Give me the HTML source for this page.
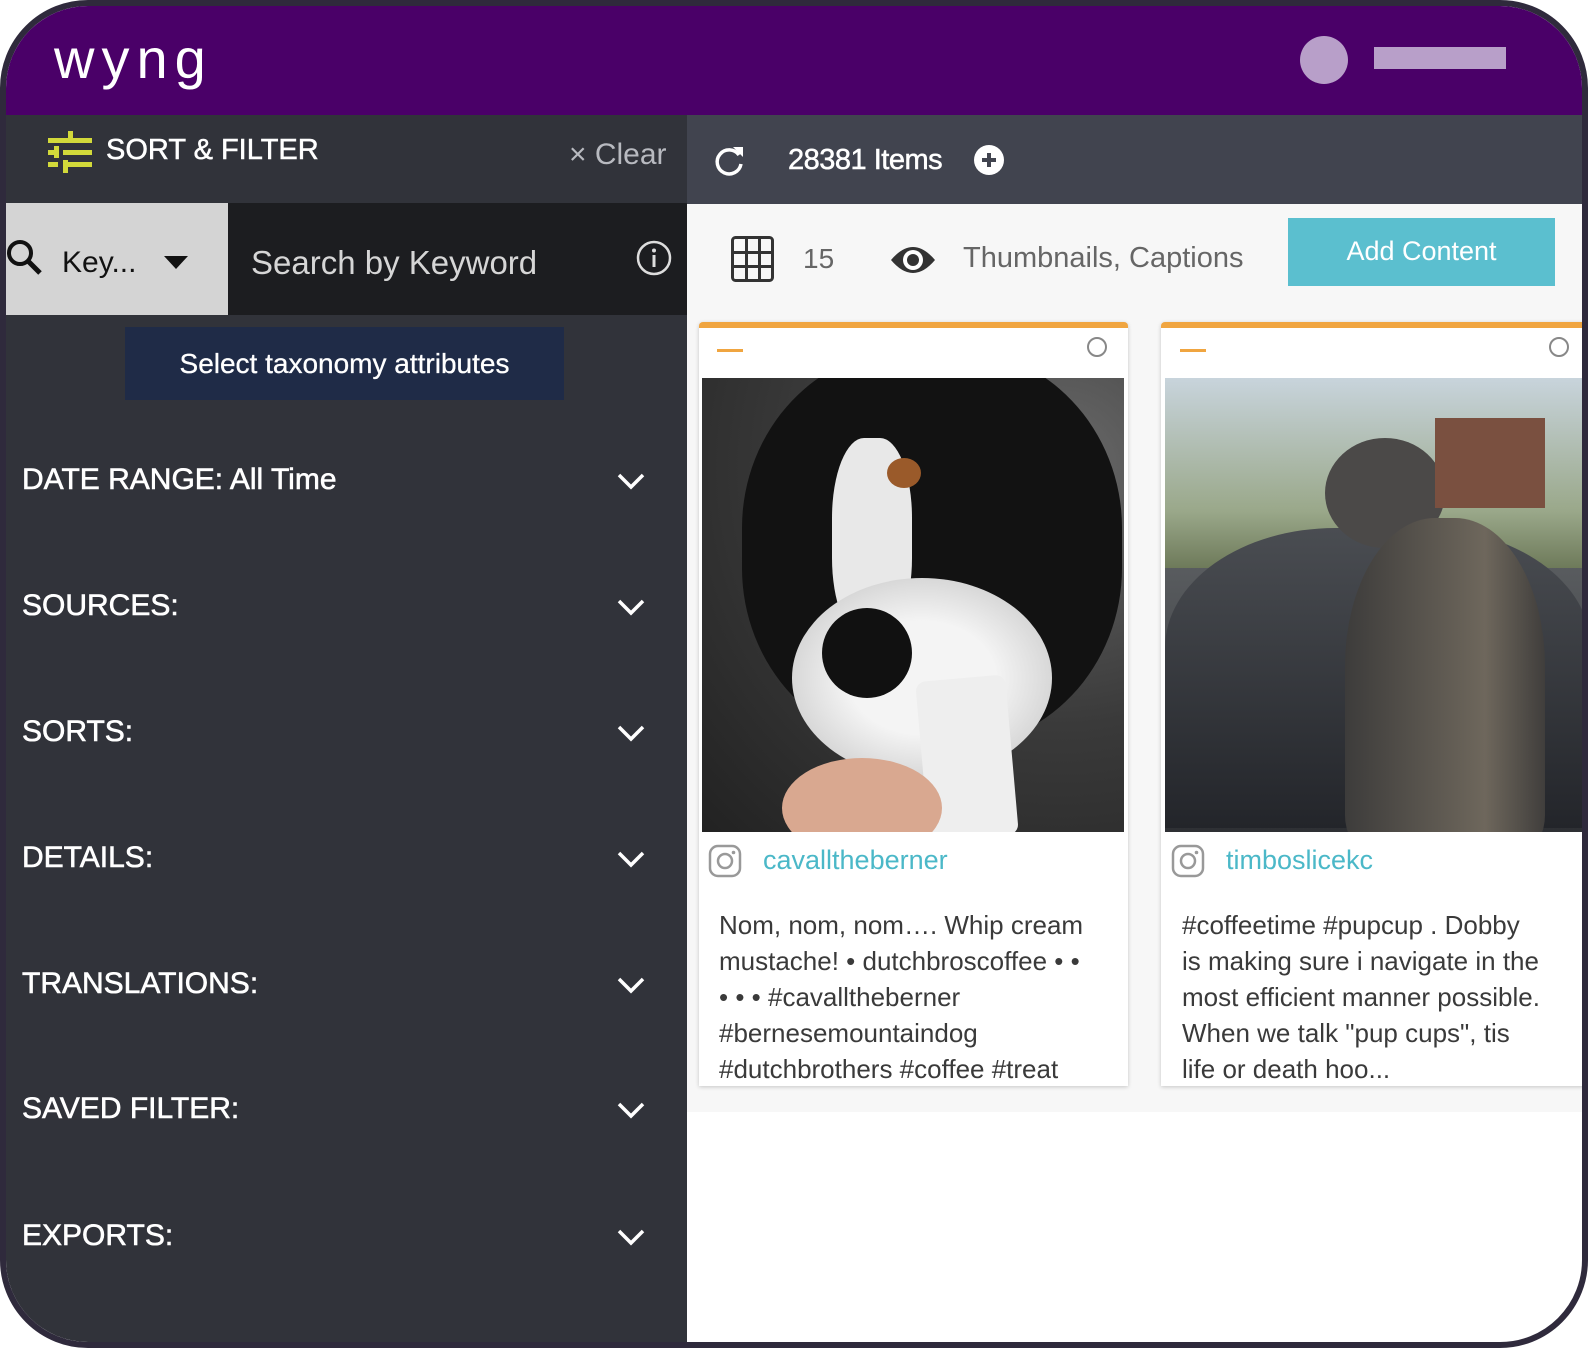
<!DOCTYPE html>
<html><head><meta charset="utf-8"><style>
*{box-sizing:border-box;margin:0;padding:0}
body{width:1588px;height:1348px;background:#fff;font-family:"Liberation Sans",sans-serif;overflow:hidden}
.frame{position:absolute;left:0;top:0;width:1588px;height:1348px;border:6px solid #2f2a3c;border-radius:88px;overflow:hidden;background:#fff}
.abs{position:absolute}
.hdr{left:0;top:0;width:1588px;height:109px;background:#4a0068}
.side{left:0;top:109px;width:681px;height:1240px;background:#31333a}
.fl{left:16px;color:#fff;font-size:30px;-webkit-text-stroke:0.6px #fff}
.chev{left:610px;width:30px;height:20px}
.cap{color:#3a3a3a;font-size:26px;line-height:36px}
</style></head><body>
<div class="frame">
<div class="abs hdr"></div>
<div class="abs" style="left:48px;top:20px;color:#fff;font-size:56px;letter-spacing:7px;font-weight:normal">wyng</div>
<div class="abs" style="left:1294px;top:30px;width:48px;height:48px;border-radius:50%;background:#b89fc9"></div>
<div class="abs" style="left:1368px;top:41px;width:132px;height:22px;background:#b89fc9"></div>

<div class="abs side"></div>
<svg class="abs" style="left:40px;top:124px" width="48" height="44" viewBox="0 0 48 44"><g fill="#d2d93a"><rect x="2" y="8" width="44" height="5"/><rect x="22" y="1" width="5" height="12"/><rect x="2" y="20" width="10" height="5"/><rect x="17" y="20" width="29" height="5"/><rect x="8" y="16" width="5" height="12"/><rect x="2" y="32" width="10" height="5"/><rect x="17" y="32" width="29" height="5"/><rect x="17" y="30" width="5" height="13"/></g></svg>
<div class="abs" style="left:100px;top:128px;color:#fff;font-size:29px;-webkit-text-stroke:0.5px #fff">SORT &amp; FILTER</div>
<div class="abs" style="left:563px;top:132px;color:#b8bac0;font-size:30px">× Clear</div>

<div class="abs" style="left:0;top:197px;width:222px;height:112px;background:#d4d4d4"></div>
<svg class="abs" style="left:0;top:232px" width="40" height="40" viewBox="0 0 40 40"><circle cx="14" cy="15" r="11" fill="none" stroke="#111" stroke-width="4"/><line x1="22" y1="23" x2="34" y2="35" stroke="#111" stroke-width="5"/></svg>
<div class="abs" style="left:56px;top:240px;color:#111;font-size:30px">Key...</div>
<svg class="abs" style="left:158px;top:250px" width="24" height="14"><polygon points="0,0 24,0 12,13" fill="#111"/></svg>
<div class="abs" style="left:222px;top:197px;width:459px;height:112px;background:#1c1d20"></div>
<div class="abs" style="left:245px;top:238px;color:#d6d6d6;font-size:33px">Search by Keyword</div>
<svg class="abs" style="left:630px;top:234px" width="36" height="36"><circle cx="18" cy="18" r="16" fill="none" stroke="#ddd" stroke-width="2.5"/><rect x="16.5" y="15" width="3" height="12" fill="#ddd"/><circle cx="18" cy="10.5" r="2" fill="#ddd"/></svg>

<div class="abs" style="left:119px;top:321px;width:439px;height:73px;background:#1f2b47;color:#fff;font-size:28px;text-align:center;line-height:73px;-webkit-text-stroke:0.3px #fff">Select taxonomy attributes</div>

<div class="abs fl" style="top:457px">DATE RANGE: All Time</div>
<div class="abs fl" style="top:583px">SOURCES:</div>
<div class="abs fl" style="top:709px">SORTS:</div>
<div class="abs fl" style="top:835px">DETAILS:</div>
<div class="abs fl" style="top:961px">TRANSLATIONS:</div>
<div class="abs fl" style="top:1086px">SAVED FILTER:</div>
<div class="abs fl" style="top:1213px">EXPORTS:</div>
<svg class="abs chev" style="top:465px" viewBox="0 0 30 20"><polyline points="3,4 15,16 27,4" fill="none" stroke="#fff" stroke-width="3.5"/></svg>
<svg class="abs chev" style="top:591px" viewBox="0 0 30 20"><polyline points="3,4 15,16 27,4" fill="none" stroke="#fff" stroke-width="3.5"/></svg>
<svg class="abs chev" style="top:717px" viewBox="0 0 30 20"><polyline points="3,4 15,16 27,4" fill="none" stroke="#fff" stroke-width="3.5"/></svg>
<svg class="abs chev" style="top:843px" viewBox="0 0 30 20"><polyline points="3,4 15,16 27,4" fill="none" stroke="#fff" stroke-width="3.5"/></svg>
<svg class="abs chev" style="top:969px" viewBox="0 0 30 20"><polyline points="3,4 15,16 27,4" fill="none" stroke="#fff" stroke-width="3.5"/></svg>
<svg class="abs chev" style="top:1094px" viewBox="0 0 30 20"><polyline points="3,4 15,16 27,4" fill="none" stroke="#fff" stroke-width="3.5"/></svg>
<svg class="abs chev" style="top:1221px" viewBox="0 0 30 20"><polyline points="3,4 15,16 27,4" fill="none" stroke="#fff" stroke-width="3.5"/></svg>

<div class="abs" style="left:681px;top:109px;width:907px;height:89px;background:#41444f"></div>
<svg class="abs" style="left:707px;top:138px" width="32" height="34" viewBox="0 0 32 34"><path d="M26 11 A12 12 0 1 0 28 20" fill="none" stroke="#fff" stroke-width="3.5"/><polygon points="20,3 30,3 30,13" fill="#fff"/></svg>
<div class="abs" style="left:782px;top:138px;color:#fff;font-size:29px;letter-spacing:-0.5px;-webkit-text-stroke:0.5px #fff">28381 Items</div>
<svg class="abs" style="left:968px;top:139px" width="30" height="30"><circle cx="15" cy="15" r="15" fill="#fff"/><rect x="8" y="13" width="14" height="4" fill="#41444f"/><rect x="13" y="8" width="4" height="14" fill="#41444f"/></svg>

<div class="abs" style="left:681px;top:198px;width:907px;height:908px;background:#f7f7f7"></div>
<svg class="abs" style="left:725px;top:230px" width="43" height="46" viewBox="0 0 43 46"><rect x="1.5" y="1.5" width="40" height="43" rx="3" fill="none" stroke="#333" stroke-width="3"/><g fill="#333"><rect x="14" y="2" width="3" height="42"/><rect x="27" y="2" width="3" height="42"/><rect x="2" y="15" width="39" height="3"/><rect x="2" y="29" width="39" height="3"/></g></svg>
<div class="abs" style="left:797px;top:237px;color:#666;font-size:28px">15</div>
<svg class="abs" style="left:883px;top:236px" width="48" height="36" viewBox="0 0 48 36"><path d="M2 18 Q24 -8 46 18 Q24 44 2 18Z" fill="#333"/><circle cx="24" cy="18" r="10" fill="#fff"/><circle cx="24" cy="18" r="6" fill="#333"/></svg>
<div class="abs" style="left:957px;top:236px;color:#666;font-size:29px">Thumbnails, Captions</div>
<div class="abs" style="left:1282px;top:212px;width:267px;height:68px;background:#5bbfcf;color:#fff;font-size:27px;text-align:center;line-height:66px">Add Content</div>

<!-- card 1 -->
<div class="abs" style="left:693px;top:316px;width:429px;height:764px;background:#fff;box-shadow:0 1px 4px rgba(0,0,0,.2);border-top:6px solid #f0a540;border-radius:4px 4px 0 0"></div>
<div class="abs" style="left:711px;top:343px;width:26px;height:3px;background:#f0a540"></div>
<div class="abs" style="left:1081px;top:331px;width:20px;height:20px;border:2px solid #888;border-radius:50%"></div>
<div class="abs" style="left:696px;top:372px;width:422px;height:454px;overflow:hidden;background:radial-gradient(ellipse at 85% 20%,#6a6a6a,#3a3a3a 50%,#222 100%)">
 <div class="abs" style="left:40px;top:-30px;width:380px;height:400px;border-radius:45%;background:#121212"></div>
 <div class="abs" style="left:130px;top:60px;width:80px;height:200px;background:#e8e8e8;border-radius:40%"></div>
 <div class="abs" style="left:90px;top:200px;width:260px;height:200px;border-radius:50%;background:radial-gradient(ellipse,#f4f4f4 40%,#cfcfcf 80%)"></div>
 <div class="abs" style="left:120px;top:230px;width:90px;height:90px;border-radius:50%;background:#111"></div>
 <div class="abs" style="left:185px;top:80px;width:34px;height:30px;border-radius:50%;background:#9a5a2a"></div>
 <div class="abs" style="left:220px;top:300px;width:90px;height:160px;background:#eee;border-radius:10px;transform:rotate(-5deg)"></div>
 <div class="abs" style="left:80px;top:380px;width:160px;height:100px;background:#d9a890;border-radius:50%"></div>
</div>
<svg class="abs" style="left:702px;top:838px" width="34" height="34"><rect x="2" y="2" width="30" height="30" rx="8" fill="none" stroke="#999" stroke-width="2.5"/><circle cx="17" cy="17" r="7" fill="none" stroke="#999" stroke-width="2.5"/><circle cx="25.5" cy="8.5" r="1.8" fill="#999"/></svg>
<div class="abs" style="left:757px;top:839px;color:#4bb8c8;font-size:27px">cavalltheberner</div>
<div class="abs cap" style="left:713px;top:901px;width:400px">Nom, nom, nom…. Whip cream<br>mustache! • dutchbroscoffee • •<br>• • • #cavalltheberner<br>#bernesemountaindog<br>#dutchbrothers #coffee #treat</div>

<!-- card 2 -->
<div class="abs" style="left:1155px;top:316px;width:440px;height:764px;background:#fff;box-shadow:0 1px 4px rgba(0,0,0,.2);border-top:6px solid #f0a540;border-radius:4px 4px 0 0"></div>
<div class="abs" style="left:1174px;top:343px;width:26px;height:3px;background:#f0a540"></div>
<div class="abs" style="left:1543px;top:331px;width:20px;height:20px;border:2px solid #888;border-radius:50%"></div>
<div class="abs" style="left:1159px;top:372px;width:426px;height:454px;overflow:hidden;background:linear-gradient(180deg,#8a8d8f 0%,#5a5d60 40%,#2e3034 100%)">
 <div class="abs" style="left:0;top:0;width:426px;height:190px;background:linear-gradient(180deg,#c8d4dc,#9aa88a 70%,#6e7a5a)"></div>
 <div class="abs" style="left:0;top:150px;width:426px;height:300px;background:linear-gradient(180deg,#4a4d52,#23252a);border-radius:40% 40% 0 0"></div>
 <div class="abs" style="left:160px;top:60px;width:120px;height:110px;border-radius:50%;background:#4b4948"></div>
 <div class="abs" style="left:180px;top:140px;width:200px;height:330px;border-radius:45% 45% 10% 10%;background:linear-gradient(90deg,#3d3c3b,#6e675c 70%,#403e3c)"></div>
 <div class="abs" style="left:270px;top:40px;width:110px;height:90px;background:#7a5040"></div>
</div>
<svg class="abs" style="left:1165px;top:838px" width="34" height="34"><rect x="2" y="2" width="30" height="30" rx="8" fill="none" stroke="#999" stroke-width="2.5"/><circle cx="17" cy="17" r="7" fill="none" stroke="#999" stroke-width="2.5"/><circle cx="25.5" cy="8.5" r="1.8" fill="#999"/></svg>
<div class="abs" style="left:1220px;top:839px;color:#4bb8c8;font-size:27px">timboslicekc</div>
<div class="abs cap" style="left:1176px;top:901px;width:400px">#coffeetime #pupcup . Dobby<br>is making sure i navigate in the<br>most efficient manner possible.<br>When we talk "pup cups", tis<br>life or death hoo...</div>
</div>
</body></html>
